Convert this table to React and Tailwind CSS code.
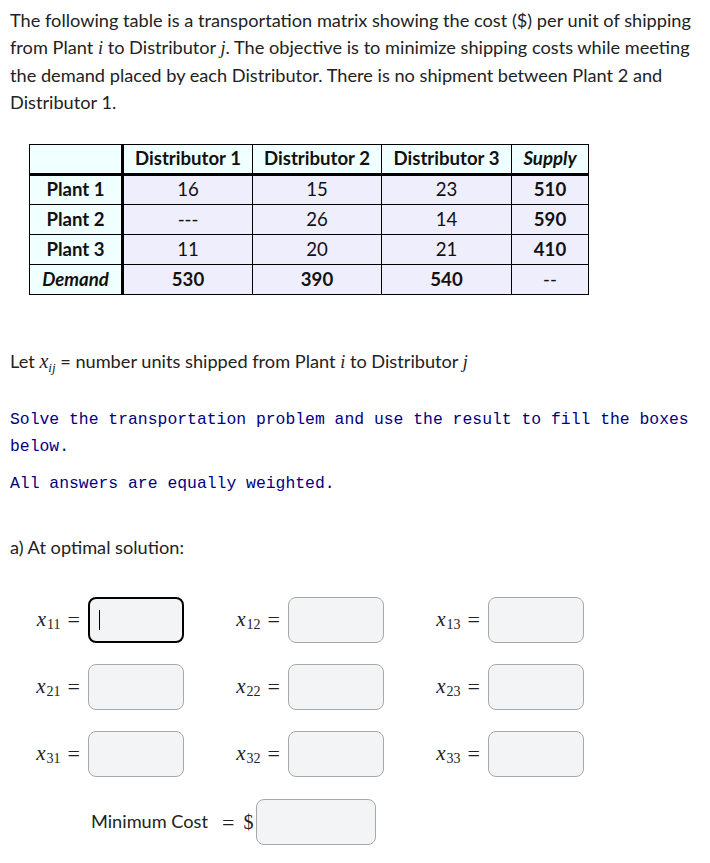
import React from "react";

const serif = "font-['Liberation_Serif',serif]";
const serifI = "font-['Liberation_Serif',serif] italic";

function MathVar({ sub }) {
  return (
    <span className="inline-flex items-baseline whitespace-nowrap">
      <span className={`text-[21px] ${serifI}`}>x</span>
      <span className={`text-[14px] relative top-[3px] ml-[1px] ${serif}`}>{sub}</span>
    </span>
  );
}

function Eq() {
  return <span className={`text-[22px] ml-[7px] mr-[8px] leading-none ${serif}`}>=</span>;
}

function Box({ focused, wide }) {
  return (
    <div
      className={`relative ${wide ? "w-[120px]" : "w-[96px]"} h-[46px] rounded-[8px] bg-[#f3f4f6] ${
        focused ? "border-2 border-black" : "border border-[#a8a8a8]"
      }`}
    >
      {focused && <span className="absolute left-[9px] top-[11px] w-px h-[20px] bg-black" />}
    </div>
  );
}

function Cell({ sub, focused }) {
  return (
    <div className="flex items-center justify-end">
      <MathVar sub={sub} />
      <Eq />
      <Box focused={focused} />
    </div>
  );
}

export default function App() {
  const th = "border border-black bg-[#f0ffff] font-bold h-[30px] p-0 text-center";
  const td = "border border-black bg-[#eeeefc] h-[30px] p-0 text-center";
  const rh = "border border-black border-r-[3px] bg-[#f0ffff] font-bold h-[30px] p-0 text-center";
  return (
    <div className="bg-white text-[#222] min-h-[863px] px-[10px] pt-[7px] font-['Lato','Noto_Sans',sans-serif]">
      <p className="text-[18.2px] leading-[27px] w-[690px]">
        The following table is a transportation matrix showing the cost ($) per unit of shipping from Plant{" "}
        <span className={serifI}>i</span> to Distributor <span className={serifI}>j</span>. The objective is to
        minimize shipping costs while meeting the demand placed by each Distributor. There is no shipment between
        Plant 2 and Distributor 1.
      </p>

      <table className="ml-[19px] mt-[28px] border-collapse text-[18.6px] text-[#111]">
        <colgroup>
          <col className="w-[93px]" />
          <col className="w-[130px]" />
          <col className="w-[129px]" />
          <col className="w-[130px]" />
          <col className="w-[77px]" />
        </colgroup>
        <thead>
          <tr>
            <th className={`${th} border-b-[3px] border-r-[3px]`}></th>
            <th className={`${th} border-b-[3px]`}>Distributor 1</th>
            <th className={`${th} border-b-[3px]`}>Distributor 2</th>
            <th className={`${th} border-b-[3px]`}>Distributor 3</th>
            <th className={`${th} border-b-[3px] italic`}>Supply</th>
          </tr>
        </thead>
        <tbody>
          <tr>
            <td className={rh}>Plant 1</td>
            <td className={td}>16</td>
            <td className={td}>15</td>
            <td className={td}>23</td>
            <td className={`${td} font-bold`}>510</td>
          </tr>
          <tr>
            <td className={rh}>Plant 2</td>
            <td className={td}>---</td>
            <td className={td}>26</td>
            <td className={td}>14</td>
            <td className={`${td} font-bold`}>590</td>
          </tr>
          <tr>
            <td className={rh}>Plant 3</td>
            <td className={td}>11</td>
            <td className={td}>20</td>
            <td className={td}>21</td>
            <td className={`${td} font-bold`}>410</td>
          </tr>
          <tr>
            <td className={`${rh} italic`}>Demand</td>
            <td className={`${td} font-bold`}>530</td>
            <td className={`${td} font-bold`}>390</td>
            <td className={`${td} font-bold`}>540</td>
            <td className={td}>--</td>
          </tr>
        </tbody>
      </table>

      <p className="text-[18.2px] leading-[27px] mt-[53px]">
        Let <span className={`text-[20px] ${serifI}`}>x</span>
        <span className={`text-[13px] relative top-[4px] ${serifI}`}>ij</span> = number units shipped from Plant{" "}
        <span className={serifI}>i</span> to Distributor <span className={serifI}>j</span>
      </p>

      <div className="text-[#000080] text-[16.4px] leading-[27px] mt-[29px] font-['Liberation_Mono',monospace]">
        <p>Solve the transportation problem and use the result to fill the boxes below.</p>
        <p className="mt-[10px]">All answers are equally weighted.</p>
      </div>

      <p className="text-[18.2px] leading-[27px] mt-[37px]">a) At optimal solution:</p>

      <div className="grid grid-cols-[174px_200px_200px] gap-y-[21px] mt-[36px]">
        <Cell sub="11" focused />
        <Cell sub="12" />
        <Cell sub="13" />
        <Cell sub="21" />
        <Cell sub="22" />
        <Cell sub="23" />
        <Cell sub="31" />
        <Cell sub="32" />
        <Cell sub="33" />
      </div>

      <div className="flex items-center ml-[81px] mt-[22px]">
        <span className="text-[18.2px]">Minimum Cost</span>
        <span className={`text-[22px] ml-[14px] mr-[9px] ${serif}`}>=</span>
        <span className={`text-[20px] mr-[3px] ${serif}`}>$</span>
        <Box wide />
      </div>
    </div>
  );
}
